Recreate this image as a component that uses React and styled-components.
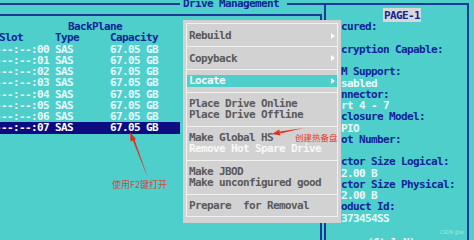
import React from 'react';
import styled, { createGlobalStyle } from 'styled-components';

const CYAN = '#4ecfcb';
const LINE = '#1c3a94';
const INK = '#122497';
const LIGHT = '#eafafa';
const ROW = 11.25;
const MROW = 11.33;

const GlobalStyle = createGlobalStyle`
  html, body { margin: 0; padding: 0; background: ${CYAN}; }
  body { font-family: "DejaVu Sans Mono", "Liberation Mono", monospace; }
`;

const Screen = styled.div`
  position: relative;
  width: 474px;
  height: 240px;
  overflow: hidden;
  box-sizing: border-box;
  padding-top: 3px;
  background: ${CYAN};
  font-family: "DejaVu Sans Mono", "Liberation Mono", monospace;
  font-size: 11px;
  font-weight: bold;
  letter-spacing: -0.62px;
  line-height: ${ROW}px;
  white-space: pre;
`;

const Frame = styled.div`
  width: 469px;
  height: 100%;
  box-sizing: border-box;
  border-right: 2px solid ${LINE};
  display: flex;
  flex-direction: column;
`;

const TopRule = styled.div`
  display: flex;
  align-items: center;
  height: 2px;
`;

const Rule = styled.div`
  height: 2px;
  background: ${LINE};
  flex: ${p => (p.$w ? `0 0 ${p.$w}px` : '1')};
`;

const Title = styled.span`
  color: ${INK};
  padding: 0 8px 0 3px;
`;

const Body = styled.div`
  flex: 1;
  display: flex;
`;

const LeftPane = styled.div`
  width: 322px;
  margin-top: 9px;
  box-sizing: border-box;
  border-top: 2px solid ${LINE};
  border-right: 2px solid ${LINE};
  padding-top: 5px;
`;

const Table = styled.div`
  width: 185px;
  margin-left: -5px;
`;

const Caption = styled.div`
  color: ${INK};
  padding-left: 73px;
`;

const TRow = styled.div`
  display: grid;
  grid-template-columns: 60px 55px 1fr;
  color: ${p => (p.$head ? INK : LIGHT)};
  background: ${p => (p.$sel ? '#0c0c80' : 'transparent')};
  ${p => p.$sel && 'color: #ffffff;'}
`;

const SlotCell = styled.span`
  padding-left: ${p => (p.$head ? 4 : 0)}px;
`;

const RightPane = styled.div`
  flex: 1;
  margin-left: 2px;
  border-left: 2px solid ${LINE};
  padding: 5px 0 0 15px;
`;

const Line = styled.div`
  height: ${ROW}px;
  color: ${p => (p.$value ? LIGHT : INK)};
  padding-left: ${p => p.$indent || 0}px;
  margin-top: ${p => p.$drop || 0}px;
`;

const Page = styled.span`
  background: #d8d8d8;
  color: ${INK};
  padding: 1px 1px 0;
`;

const Menu = styled.div`
  position: absolute;
  left: 183px;
  top: 20px;
  width: 158px;
  height: 203px;
  box-sizing: border-box;
  padding: 3px 3px 6px 3px;
  background: #d2d2d2;
`;

const MenuInner = styled.div`
  height: 100%;
  box-sizing: border-box;
  border: 1px solid #f0f0f0;
  padding-top: 6px;
  line-height: ${MROW}px;
`;

const Item = styled.div`
  display: flex;
  align-items: center;
  justify-content: space-between;
  height: ${MROW}px;
  padding: 0 2px 0 2px;
  color: ${p => (p.$active || p.$dim ? '#f8f8f8' : '#5a5a5a')};
  background: ${p => (p.$active ? CYAN : 'transparent')};
`;

const Arrow = styled.span`
  width: 0;
  height: 0;
  border-left: 4px solid #ffffff;
  border-top: 3px solid transparent;
  border-bottom: 3px solid transparent;
`;

const Separator = styled.div`
  height: ${MROW}px;
  display: flex;
  align-items: center;
  &::before {
    content: '';
    flex: 1;
    height: 1px;
    background: #f2f2f2;
  }
`;

const Marks = styled.svg`
  position: absolute;
  left: 0;
  top: 0;
  pointer-events: none;
`;

const Note = styled.span`
  position: absolute;
  left: ${p => p.$x}px;
  top: ${p => p.$y}px;
  font-family: "Noto Sans CJK SC", "Noto Sans", sans-serif;
  font-weight: normal;
  font-size: ${p => p.$size}px;
  letter-spacing: 0;
  line-height: 1;
  color: ${p => p.$color};
`;

const Watermark = styled.span`
  position: absolute;
  left: 440px;
  top: 230px;
  font-family: "Noto Sans", sans-serif;
  font-weight: normal;
  font-size: 5px;
  letter-spacing: 0;
  line-height: 1;
  color: rgba(255, 255, 255, 0.5);
`;

const drives = ['00', '01', '02', '03', '04', '05', '06', '07'];

const panel = [
  { t: 'cured:' },
  { t: '' },
  { t: 'cryption Capable:' },
  { t: '' },
  { t: 'M Support:' },
  { t: 'sabled', v: true },
  { t: 'nnector:' },
  { t: 'rt 4 - 7', v: true },
  { t: 'closure Model:' },
  { t: 'PIO', v: true },
  { t: 'ot Number:' },
  { t: '' },
  { t: 'ctor Size Logical:' },
  { t: '2.00 B', v: true },
  { t: 'ctor Size Physical:' },
  { t: '2.00 B', v: true },
  { t: 'oduct Id:' },
  { t: '373454SS', v: true },
  { t: '' },
  { t: '(Ctrl-N)', v: true, i: 26, d: 2 },
];

const menu = [
  [{ t: 'Rebuild', sub: true }],
  [{ t: 'Copyback', sub: true }],
  [{ t: 'Locate', sub: true, active: true }],
  [{ t: 'Place Drive Online' }, { t: 'Place Drive Offline' }],
  [{ t: 'Make Global HS' }, { t: 'Remove Hot Spare Drive', dim: true }],
  [{ t: 'Make JBOD' }, { t: 'Make unconfigured good' }],
  [{ t: 'Prepare  for Removal' }],
];

export default function App() {
  return (
    <Screen>
      <GlobalStyle />
      <Frame>
        <TopRule>
          <Rule $w={180} />
          <Title>Drive Management</Title>
          <Rule />
        </TopRule>
        <Body>
          <LeftPane>
            <Table>
              <Caption>BackPlane</Caption>
              <TRow $head>
                <SlotCell $head>Slot</SlotCell>
                <span>Type</span>
                <span>Capacity</span>
              </TRow>
              {drives.map(d => (
                <TRow key={d} $sel={d === '07'}>
                  <SlotCell>{`---:--:${d}`}</SlotCell>
                  <span>SAS</span>
                  <span>67.05 GB</span>
                </TRow>
              ))}
            </Table>
          </LeftPane>
          <RightPane>
            <Line $indent={42}>
              <Page>PAGE-1</Page>
            </Line>
            {panel.map((l, i) => (
              <Line key={i} $value={l.v} $indent={l.i} $drop={l.d}>
                {l.t}
              </Line>
            ))}
          </RightPane>
        </Body>
      </Frame>

      <Menu>
        <MenuInner>
          {menu.map((group, gi) => (
            <React.Fragment key={gi}>
              {gi > 0 && <Separator />}
              {group.map(it => (
                <Item key={it.t} $active={it.active} $dim={it.dim}>
                  <span>{it.t}</span>
                  {it.sub && <Arrow />}
                </Item>
              ))}
            </React.Fragment>
          ))}
        </MenuInner>
      </Menu>

      <Marks width="474" height="240" viewBox="0 0 474 240">
        <polygon points="148,178 132.6,140 134.4,139.3" fill="#e2301e" />
        <polygon points="130,132 136.1,139.3 130.5,141.5" fill="#e2301e" />
        <polygon points="304,128 280,131.6 280.3,133.4" fill="#e2301e" />
        <polygon points="272,134 280.4,135.5 279.3,129.6" fill="#e2301e" />
      </Marks>
      <Note $x={112} $y={180} $size={9} $color="#cf4a44">使用F2键打开</Note>
      <Note $x={295} $y={133} $size={8.5} $color="#e53a2e">创建热备盘</Note>
      <Watermark>CSDN @sx</Watermark>
    </Screen>
  );
}
